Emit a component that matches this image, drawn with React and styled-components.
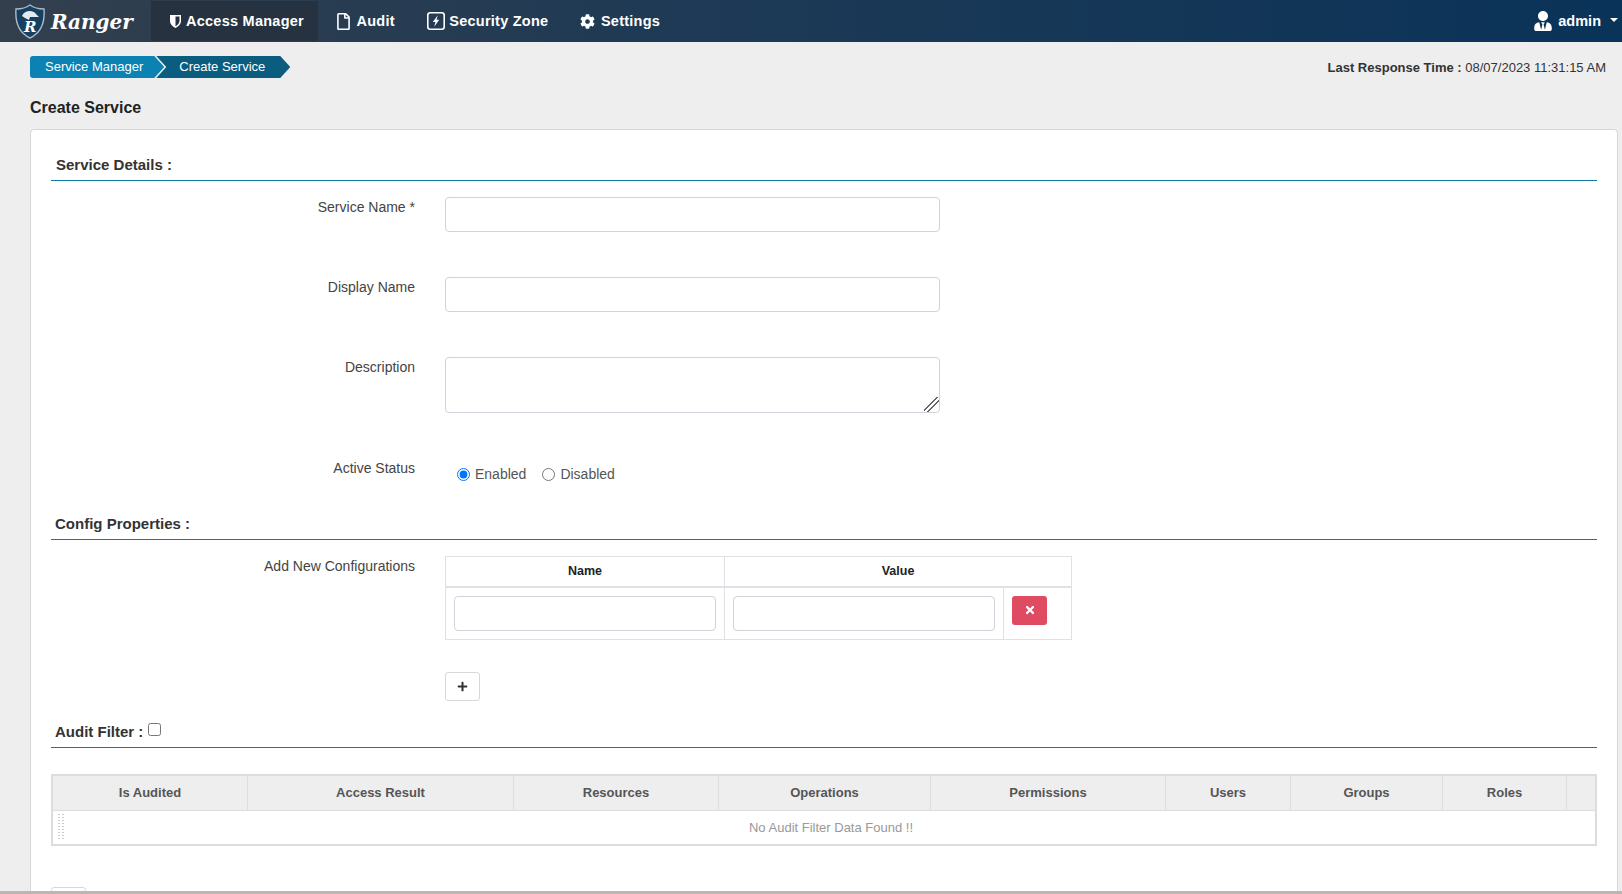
import styled, { createGlobalStyle } from 'styled-components'
import { FaCog, FaPlus, FaRegFile, FaTimes, FaUserTie } from 'react-icons/fa'

const GlobalStyle = createGlobalStyle`
  html, body {
    margin: 0;
    height: 100%;
    overflow: hidden;
    background: #eee;
    color: #333;
    font-family: "Liberation Sans", Arial, sans-serif;
    font-size: 14px;
  }
  * { box-sizing: border-box; }
`

const auditColumns = [
  { name: 'Is Audited', width: 195 },
  { name: 'Access Result', width: 266 },
  { name: 'Resources', width: 205 },
  { name: 'Operations', width: 212 },
  { name: 'Permissions', width: 235 },
  { name: 'Users', width: 125 },
  { name: 'Groups', width: 152 },
  { name: 'Roles', width: 124 },
  { name: '', width: 28 }
]

function LogoMark() {
  return (
    <LogoSvg viewBox="0 0 30 35">
      <path
        d="M15 1 C19 4 24 5 29 5 C30 18 26 29 15 34 C4 29 0 18 1 5 C6 5 11 4 15 1 Z"
        fill="#17405f"
        stroke="#a9bbc8"
        strokeWidth="1.4"
      />
      <path d="M7 12 C9 7 17 5 21 10 L24 13 L15 13 L14 16 L10 14 Z" fill="#e3e9ee" />
      <text x="9" y="28" fontFamily="'DejaVu Serif', serif" fontWeight="700" fontStyle="italic" fontSize="15" fill="#fff">
        R
      </text>
    </LogoSvg>
  )
}

function ShieldIcon() {
  return (
    <svg width="11" height="13" viewBox="0 0 11 13">
      <path
        fillRule="evenodd"
        d="M0 0 H11 V6 C11 9.5 7.5 12 5.5 13 C3.5 12 0 9.5 0 6 Z M5.5 1.5 V11.3 C7 10.4 9.5 8.6 9.5 6 V1.5 Z"
        fill="#fff"
      />
    </svg>
  )
}

function BoltIcon() {
  return (
    <svg width="18" height="18" viewBox="0 0 18 18">
      <rect x="0.8" y="0.8" width="16.4" height="16.4" rx="2.5" fill="none" stroke="#fff" strokeWidth="1.6" />
      <path d="M10.8 3.2 L5.8 10 H8.5 L7.2 14.8 L12.2 7.8 H9.5 Z" fill="#fff" />
    </svg>
  )
}

function App() {
  return (
    <>
      <GlobalStyle />
      <Navbar>
        <Brand>
          <LogoMark />
          <BrandName>Ranger</BrandName>
        </Brand>
        <NavItem $active $left={19} $gap={5}>
          <ShieldIcon />
          Access Manager
        </NavItem>
        <NavItem $left={17} $gap={4}>
          <FaRegFile size={17} />
          Audit
        </NavItem>
        <NavItem $left={18}>
          <BoltIcon />
          Security Zone
        </NavItem>
        <NavItem $left={17} $gap={6}>
          <FaCog size={15} />
          Settings
        </NavItem>
        <UserMenu>
          <FaUserTie size={20} />
          admin
          <Caret />
        </UserMenu>
      </Navbar>

      <TopRow>
        <Breadcrumb>
          <Crumb $first>Service Manager</Crumb>
          <Crumb>Create Service</Crumb>
        </Breadcrumb>
        <ResponseTime>
          <b>Last Response Time :</b> 08/07/2023 11:31:15 AM
        </ResponseTime>
      </TopRow>

      <PageTitle>Create Service</PageTitle>

      <Card>
        <SectionTitle $inset={5}>Service Details :</SectionTitle>
        <FormRow>
          <Label>Service Name *</Label>
          <TextInput type="text" />
        </FormRow>
        <FormRow>
          <Label>Display Name</Label>
          <TextInput type="text" />
        </FormRow>
        <DescriptionRow>
          <Label>Description</Label>
          <TextArea />
        </DescriptionRow>
        <StatusRow>
          <Label>Active Status</Label>
          <RadioGroup>
            <RadioLabel>
              <input type="radio" name="active" defaultChecked />
              Enabled
            </RadioLabel>
            <RadioLabel>
              <input type="radio" name="active" />
              Disabled
            </RadioLabel>
          </RadioGroup>
        </StatusRow>

        <SectionTitle>Config Properties :</SectionTitle>
        <ConfigRow>
          <Label>Add New Configurations</Label>
          <div>
            <ConfigTable>
              <colgroup>
                <col width="279" />
                <col width="279" />
                <col width="68" />
              </colgroup>
              <thead>
                <tr>
                  <ConfigHead>Name</ConfigHead>
                  <ConfigHead colSpan="2">Value</ConfigHead>
                </tr>
              </thead>
              <tbody>
                <tr>
                  <ConfigCell>
                    <CellInput type="text" />
                  </ConfigCell>
                  <ConfigCell>
                    <CellInput type="text" />
                  </ConfigCell>
                  <ConfigCell>
                    <DeleteButton>
                      <FaTimes size={12} />
                    </DeleteButton>
                  </ConfigCell>
                </tr>
              </tbody>
            </ConfigTable>
            <AddButton>
              <FaPlus size={11} />
            </AddButton>
          </div>
        </ConfigRow>

        <SectionTitle>
          Audit Filter : <AuditCheck type="checkbox" />
        </SectionTitle>
        <AuditGrid>
          <AuditHead>
            {auditColumns.map((col, i) => (
              <AuditHeadCell key={i} $width={col.width}>
                {col.name}
              </AuditHeadCell>
            ))}
          </AuditHead>
          <AuditBody>
            <DragHandle />
            No Audit Filter Data Found !!
          </AuditBody>
        </AuditGrid>
        <SaveButton />
      </Card>
      <WindowEdge />
    </>
  )
}

const Navbar = styled.nav`
  display: flex;
  align-items: stretch;
  height: 42px;
  padding-top: 1px;
  background: linear-gradient(90deg, #333f4d 0%, #1f3a55 40%, #0a3359 100%);
  color: #fff;
`

const Brand = styled.div`
  display: flex;
  align-items: center;
  gap: 6px;
  width: 151px;
  padding-left: 15px;
`

const LogoSvg = styled.svg`
  width: 30px;
  height: 35px;
`

const BrandName = styled.span`
  font-family: "DejaVu Serif", serif;
  font-weight: 700;
  font-style: italic;
  font-size: 20px;
`

const NavItem = styled.a`
  display: flex;
  align-items: center;
  gap: ${(props) => props.$gap || 4}px;
  height: 40px;
  padding: 0 14.5px 0 ${(props) => props.$left || 18}px;
  font-weight: 700;
  font-size: 14.5px;
  letter-spacing: 0.25px;
  background: ${(props) => (props.$active ? '#26323f' : 'transparent')};
`

const UserMenu = styled.div`
  display: flex;
  align-items: center;
  gap: 7px;
  margin-left: auto;
  padding: 0 4px 2px 0;
  font-weight: 700;
  font-size: 14.5px;
  svg {
    margin-right: -2px;
  }
`

const Caret = styled.span`
  margin-left: 2px;
  margin-bottom: 2px;
  border-top: 4px solid #fff;
  border-left: 4px solid transparent;
  border-right: 4px solid transparent;
`

const TopRow = styled.div`
  display: flex;
  align-items: center;
  justify-content: space-between;
  padding: 14px 16px 0 30px;
`

const Breadcrumb = styled.div`
  display: flex;
`

const Crumb = styled.span`
  display: block;
  height: 22px;
  line-height: 22px;
  font-size: 13px;
  color: #fff;
  background: ${(props) => (props.$first ? '#0b82b2' : '#0b5d80')};
  clip-path: polygon(${(props) =>
    props.$first
      ? '0 0, calc(100% - 10px) 0, 100% 50%, calc(100% - 10px) 100%, 0 100%'
      : '0 0, calc(100% - 10px) 0, 100% 50%, calc(100% - 10px) 100%, 0 100%, 10px 50%'});
  border-radius: ${(props) => (props.$first ? '3px 0 0 3px' : '0')};
  padding: ${(props) => (props.$first ? '0 21px 0 15px' : '0 25px 0 23px')};
  margin-left: ${(props) => (props.$first ? '0' : '-8px')};
`

const ResponseTime = styled.div`
  font-size: 13px;
  b {
    font-weight: 700;
  }
`

const PageTitle = styled.h1`
  margin: 20px 0 11px 30px;
  height: 20px;
  line-height: 20px;
  font-size: 16px;
  font-weight: 700;
  color: #222;
`

const Card = styled.section`
  height: 900px;
  margin: 0 4px 0 30px;
  padding: 21px 20px 0;
  background: #fff;
  border: 1px solid #d6d6d6;
  border-radius: 4px;
`

const SectionTitle = styled.div`
  display: flex;
  align-items: center;
  gap: 5px;
  height: 30px;
  padding: 0 0 2px ${(props) => props.$inset || 4}px;
  font-weight: 700;
  font-size: 15px;
  color: #333;
  border-bottom: 1px solid #0f7ca8;
`

const FormRow = styled.div`
  display: grid;
  grid-template-columns: 364px 1fr;
  column-gap: 30px;
  margin: 16px 0 45px;
  & + & {
    margin-top: 0;
  }
`

const DescriptionRow = styled(FormRow)`
  margin-bottom: 46px;
`

const Label = styled.label`
  text-align: right;
  line-height: 20px;
  color: #444;
`

const StatusRow = styled(FormRow)`
  margin-bottom: 0;
  height: 51px;
  ${Label} {
    margin-top: -1px;
  }
`

const ConfigRow = styled(FormRow)`
  margin-bottom: 17px;
`

const TextInput = styled.input`
  width: 495px;
  height: 35px;
  background: #fff;
  border: 1px solid #ced4da;
  border-radius: 4px;
`

const TextArea = styled.textarea`
  display: block;
  width: 495px;
  height: 56px;
  background: #fff;
  border: 1px solid #ced4da;
  border-radius: 4px;
  &::-webkit-resizer {
    background: linear-gradient(
      135deg,
      transparent 41%,
      #666 41%,
      #666 47%,
      transparent 47%,
      transparent 60%,
      #666 60%,
      #666 66%,
      transparent 66%
    );
  }
`

const RadioGroup = styled.div`
  display: flex;
  align-items: center;
  gap: 16px;
  height: 30px;
  padding-left: 12px;
`

const RadioLabel = styled.label`
  display: flex;
  align-items: center;
  gap: 5px;
  color: #555;
  input {
    margin: 0;
    width: 13px;
    height: 13px;
  }
`

const ConfigTable = styled.table`
  table-layout: fixed;
  width: 626px;
  border-collapse: collapse;
`

const ConfigHead = styled.th`
  height: 30px;
  padding: 0;
  font-size: 12.5px;
  font-weight: 700;
  color: #222;
  border: 1px solid #dee2e6;
  border-bottom-width: 2px;
`

const ConfigCell = styled.td`
  height: 52px;
  padding: 8px;
  vertical-align: top;
  border: 1px solid #dee2e6;
`

const CellInput = styled.input`
  display: block;
  width: 100%;
  height: 35px;
  background: #fff;
  border: 1px solid #ced4da;
  border-radius: 4px;
`

const DeleteButton = styled.button`
  display: flex;
  align-items: center;
  justify-content: center;
  width: 35px;
  height: 29px;
  padding: 0;
  color: #fff;
  background: #df4c62;
  border: none;
  border-radius: 3px;
`

const AddButton = styled.button`
  display: flex;
  align-items: center;
  justify-content: center;
  width: 35px;
  height: 29px;
  margin-top: 32px;
  padding: 0;
  color: #333;
  background: #fff;
  border: 1px solid #d8d8d8;
  border-radius: 3px;
`

const AuditCheck = styled.input`
  margin: 0 0 3px;
  width: 13px;
  height: 13px;
`

const AuditGrid = styled.div`
  margin-top: 26px;
  border: 2px solid #ddd;
`

const AuditHead = styled.div`
  display: flex;
  height: 35px;
  background: #eee;
  border-bottom: 1px solid #ddd;
`

const AuditHeadCell = styled.div`
  display: flex;
  flex: none;
  align-items: center;
  justify-content: center;
  width: ${(props) => props.$width}px;
  padding-bottom: 1px;
  font-size: 13px;
  font-weight: 700;
  color: #555;
  border-right: 1px solid #ddd;
  &:last-child {
    border-right: none;
  }
`

const AuditBody = styled.div`
  position: relative;
  display: flex;
  align-items: center;
  justify-content: center;
  height: 33px;
  padding-left: 14px;
  font-size: 13px;
  color: #999;
`

const DragHandle = styled.span`
  position: absolute;
  left: 5px;
  top: 3px;
  width: 6px;
  height: 27px;
  background: conic-gradient(#ccc 25%, transparent 0) -2px 0 / 4px 3px;
`

const SaveButton = styled.div`
  width: 35px;
  height: 29px;
  margin-top: 41px;
  background: #fff;
  border: 1px solid #d8d8d8;
  border-radius: 3px;
`

const WindowEdge = styled.div`
  position: fixed;
  left: 0;
  right: 0;
  bottom: 0;
  height: 3px;
  background: #bcb5b0;
`

export default App
